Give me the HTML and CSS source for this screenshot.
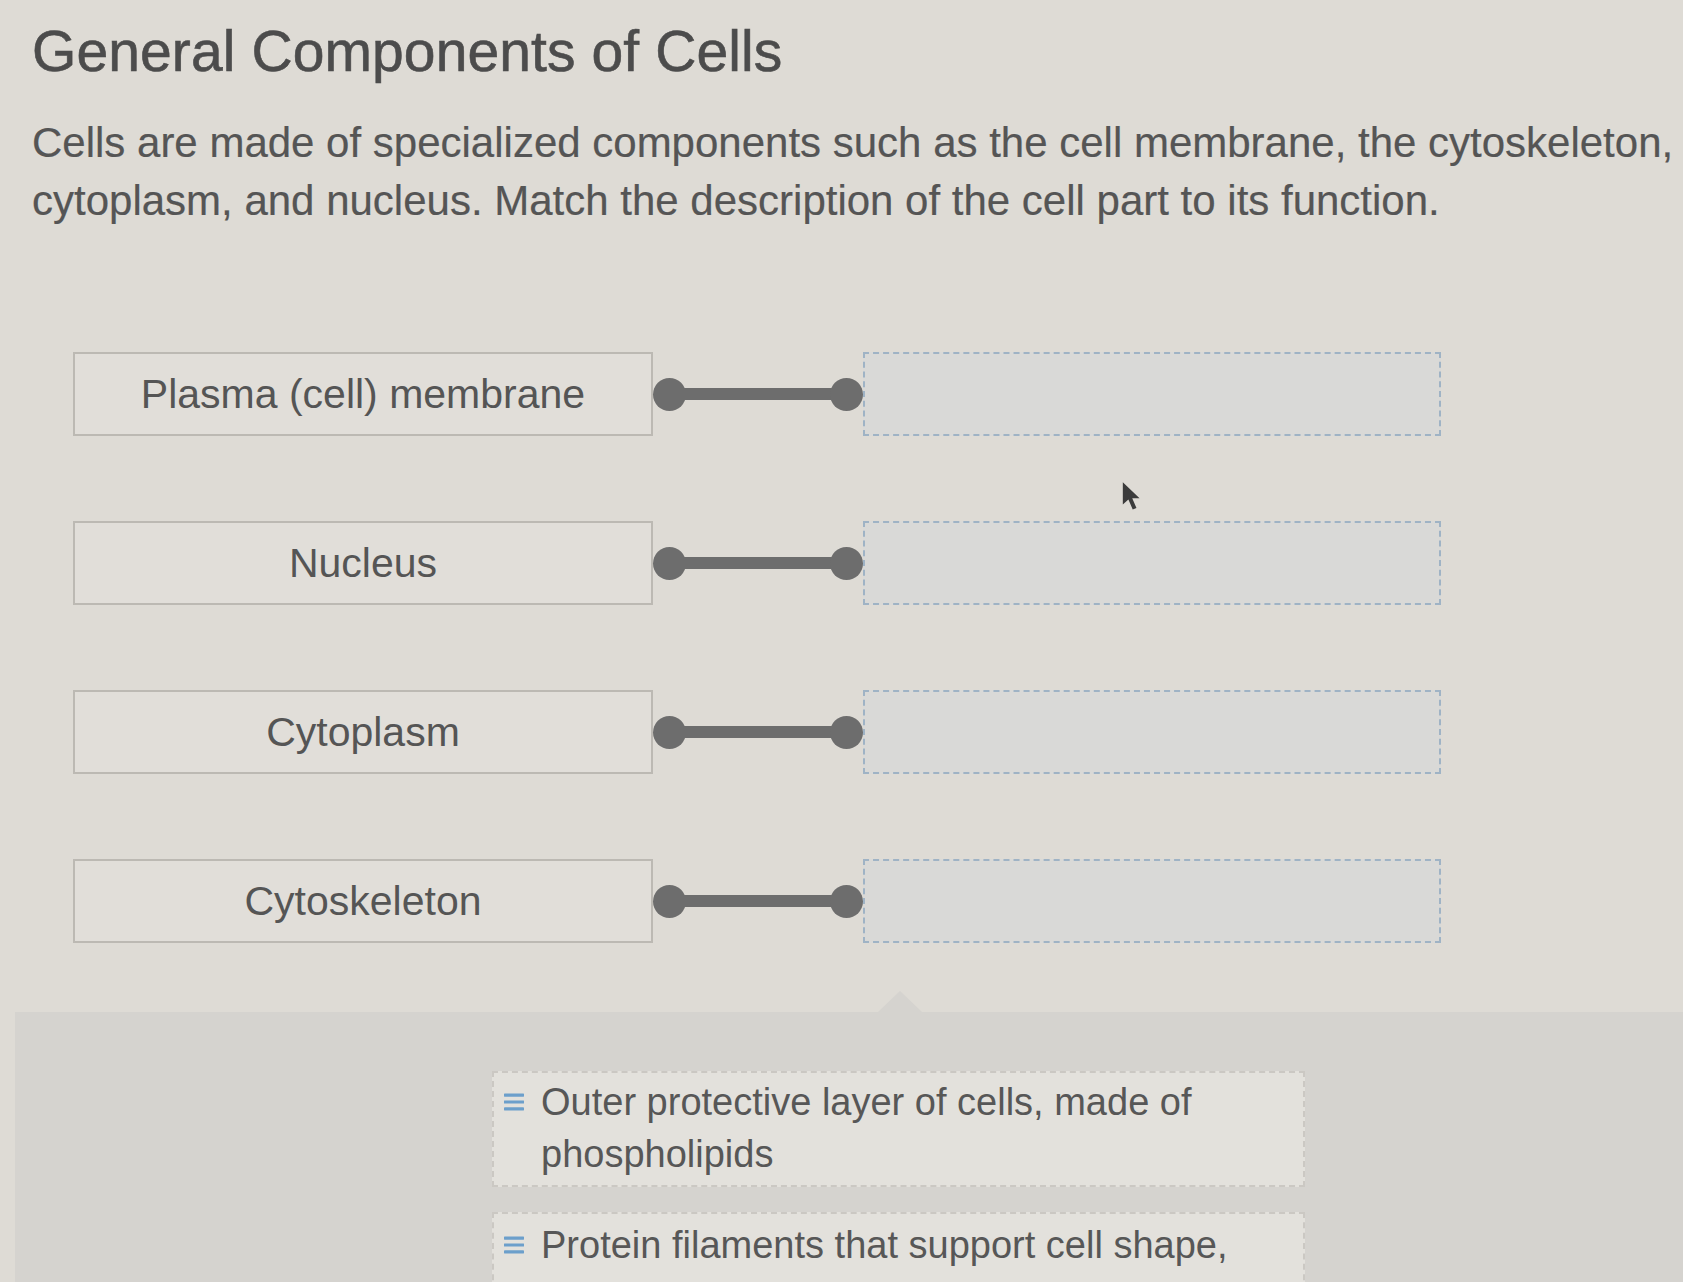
FILE: index.html
```html
<!DOCTYPE html>
<html lang="en">
<head>
<meta charset="utf-8">
<title>General Components of Cells</title>
<link rel="stylesheet" href="styles.css">
</head>
<body>
<main class="page">
  <header class="head">
    <h1 class="title">General Components of Cells</h1>
    <p class="intro">Cells are made of specialized components such as the cell membrane, the cytoskeleton, cytoplasm, and nucleus. Match the description of the cell part to its function.</p>
  </header>

  <section class="matches">
    <div class="row">
      <div class="term">Plasma (cell) membrane</div>
      <div class="link"><span class="dot"></span><span class="bar"></span><span class="dot"></span></div>
      <div class="drop"></div>
    </div>
    <div class="row">
      <div class="term">Nucleus</div>
      <div class="link"><span class="dot"></span><span class="bar"></span><span class="dot"></span></div>
      <div class="drop"></div>
    </div>
    <div class="row">
      <div class="term">Cytoplasm</div>
      <div class="link"><span class="dot"></span><span class="bar"></span><span class="dot"></span></div>
      <div class="drop"></div>
    </div>
    <div class="row">
      <div class="term">Cytoskeleton</div>
      <div class="link"><span class="dot"></span><span class="bar"></span><span class="dot"></span></div>
      <div class="drop"></div>
    </div>
  </section>

  <section class="bank">
    <div class="card">
      <svg class="grip" viewBox="0 0 21 20" aria-hidden="true">
        <rect x="0" y="1" width="21" height="3.4" rx="0.5"/>
        <rect x="0" y="8.3" width="21" height="3.4" rx="0.5"/>
        <rect x="0" y="15.6" width="21" height="3.4" rx="0.5"/>
      </svg>
      <span class="card-text">Outer protective layer of cells, made of phospholipids</span>
    </div>
    <div class="card card-last">
      <svg class="grip" viewBox="0 0 21 20" aria-hidden="true">
        <rect x="0" y="1" width="21" height="3.4" rx="0.5"/>
        <rect x="0" y="8.3" width="21" height="3.4" rx="0.5"/>
        <rect x="0" y="15.6" width="21" height="3.4" rx="0.5"/>
      </svg>
      <span class="card-text">Protein filaments that support cell shape,</span>
    </div>
  </section>
</main>

<svg class="cursor" viewBox="0 0 16 25" aria-hidden="true">
  <path d="M1 1 L1 19 L5.5 15 L9 23 L12 21.8 L8.6 14 L14.5 14 Z"/>
</svg>
</body>
</html>
```

FILE: styles.css
```css
html, body {
  margin: 0;
  padding: 0;
  height: 1282px;
  overflow: hidden;
}

body {
  background: #dedbd5;
  font-family: "Liberation Sans", Arial, "Helvetica Neue", sans-serif;
  color: #575757;
  position: relative;
}

.page {
  display: flex;
  flex-direction: column;
}

.head {
  padding: 18px 0 0 32px;
}

.title {
  margin: 0;
  font-size: 57px;
  line-height: 66px;
  font-weight: normal;
  color: #4c4c4c;
  letter-spacing: 0.1px;
  -webkit-text-stroke: 0.6px #4c4c4c;
}

.intro {
  margin: 30px 0 0 0;
  font-size: 42px;
  line-height: 58px;
  color: #555555;
  -webkit-text-stroke: 0.2px #555555;
}

.matches {
  margin-top: 122px;
  padding-left: 73px;
  display: flex;
  flex-direction: column;
  gap: 85px;
}

.row {
  display: flex;
  align-items: center;
  height: 84px;
}

.term {
  box-sizing: border-box;
  width: 580px;
  height: 84px;
  border: 2px solid #bcb9b3;
  background: #e1ded9;
  display: flex;
  align-items: center;
  justify-content: center;
  font-size: 41px;
  color: #555555;
}

.link {
  width: 210px;
  display: flex;
  align-items: center;
}

.dot {
  width: 33px;
  height: 33px;
  border-radius: 50%;
  background: #6d6d6d;
  flex: none;
}

.bar {
  flex: 1;
  height: 12px;
  background: #6d6d6d;
  margin: 0 -3px;
}

.drop {
  box-sizing: border-box;
  width: 578px;
  height: 84px;
  border: 2px dashed #9fb3c5;
  background: #d9d9d7;
}

.bank {
  position: relative;
  margin: 69px 0 0 15px;
  background: #d5d3cf;
  padding: 59px 0 0 477px;
  flex: 1;
  min-height: 300px;
}

.bank::before {
  content: "";
  position: absolute;
  top: -21px;
  left: 863px;
  border-left: 22px solid transparent;
  border-right: 22px solid transparent;
  border-bottom: 21px solid #d5d3cf;
}

.card {
  box-sizing: border-box;
  width: 813px;
  display: flex;
  align-items: flex-start;
  gap: 17px;
  padding: 3px 10px 5px 10px;
  border: 2px dashed #cbc8c3;
  background: #e3e1dc;
  font-size: 38px;
  line-height: 52px;
  color: #575757;
}

.card + .card {
  margin-top: 25px;
}

.card-last {
  padding-top: 5px;
  min-height: 120px;
}

.grip {
  flex: none;
  width: 20px;
  height: 20px;
  margin-top: 16px;
  fill: #6c9fcb;
}

.card-text {
  flex: 1;
}

.cursor {
  position: absolute;
  left: 1121px;
  top: 481px;
  width: 21px;
  height: 31px;
  fill: #3b3b3b;
}
```
